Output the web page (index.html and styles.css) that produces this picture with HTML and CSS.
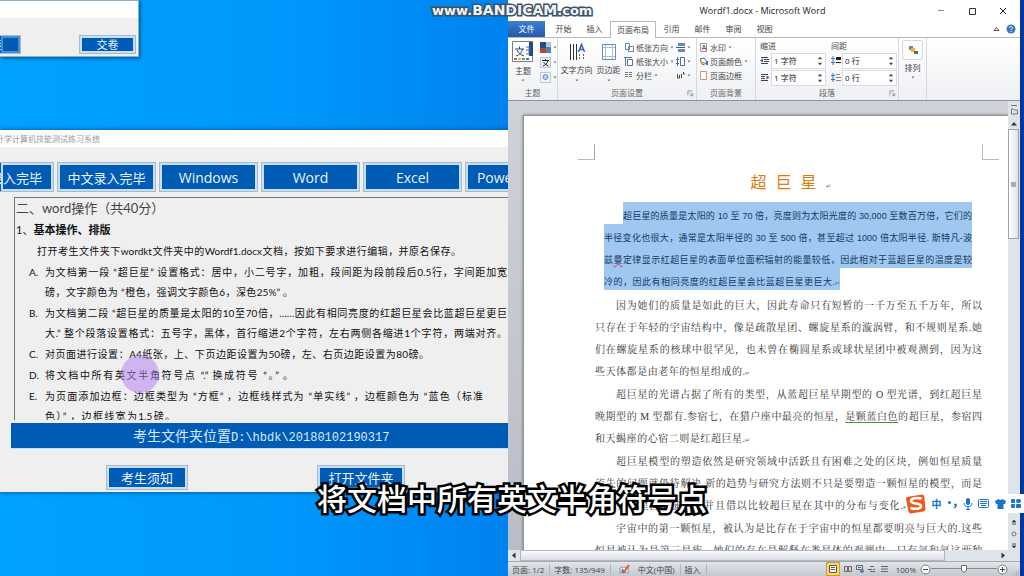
FILE: index.html
```html
<!DOCTYPE html>
<html lang="zh-CN">
<head>
<meta charset="utf-8">
<title>Wordf1.docx - Microsoft Word</title>
<link rel="stylesheet" href="styles.css">
</head>
<body>
<svg class="defs" aria-hidden="true">
  <symbol id="launch" viewBox="0 0 8 8"><path d="M1 6V1h5M3 3l3 3M6.500 3.500v3h-3" fill="none" stroke="#8a8f98"/></symbol>
  <symbol id="spin" viewBox="0 0 6 12"><path d="M0.500 4L3 1l2.500 3zM0.500 8L3 11l2.500-3z" fill="#444"/></symbol>
  <symbol id="down" viewBox="0 0 4 3"><path d="M0.500 0.500h3L2 2.500z" fill="#777"/></symbol>
</svg>
<main class="desktop">

  <section class="window timer" aria-label="考试">
    <div class="timer-title"></div>
    <div class="timer-body">
      <button class="exam-btn timer-left">能</button>
      <button class="exam-btn timer-submit">交卷</button>
    </div>
  </section>

  <section class="window exam" aria-label="考试系统">
    <header class="exam-title">升学计算机技能测试练习系统</header>
    <nav class="exam-nav">
      <button class="exam-btn nav-cut">录入完毕</button>
      <button class="exam-btn nav-btn">中文录入完毕</button>
      <button class="exam-btn nav-btn">Windows</button>
      <button class="exam-btn nav-btn">Word</button>
      <button class="exam-btn nav-btn">Excel</button>
      <button class="exam-btn nav-btn">PowerPoint</button>
    </nav>
    <article class="task">
      <h1 class="task-head">二、word操作（共40分）</h1>
      <h2 class="task-sub"><span>1、</span>基本操作、排版</h2>
      <p class="task-intro"><span class="row w-intro">打开考生文件夹下wordkt文件夹中的Wordf1.docx文档，按如下要求进行编辑，并原名保存。</span></p>
      <div class="task-item"><span>A.</span><p><span class="row w-full">为文档第一段 “超巨星” 设置格式：居中，小二号字，加粗，段间距为段前段后0.5行，字间距加宽</span><span class="row w-half">磅，文字颜色为 “橙色，强调文字颜色6，深色25%” 。</span></p></div>
      <div class="task-item"><span>B.</span><p><span class="row w-full">为文档第二段 “超巨星的质量是太阳的10至70倍，……因此有相同亮度的红超巨星会比蓝超巨星更巨</span><span class="row w-full">大.” 整个段落设置格式：五号字，黑体，首行缩进2个字符，左右两侧各缩进1个字符，两端对齐。</span></p></div>
      <div class="task-item"><span>C.</span><p><span class="row w-page">对页面进行设置：A4纸张，上、下页边距设置为50磅，左、右页边距设置为80磅。</span></p></div>
      <div class="task-item"><span>D.</span><p><span class="row w-half">将文档中所有英文半角符号点 “.” 换成符号 “。” 。</span></p></div>
      <div class="task-item"><span>E.</span><p><span class="row w-edge">为页面添加边框：边框类型为 “方框” ，边框线样式为 “单实线” ，边框颜色为 “蓝色（标准</span><span class="row w-tail">色）” ，边框线宽为1.5磅。</span></p></div>
    </article>
    <div class="folder-bar">考生文件夹位置<span>D:\hbdk\20180102190317</span></div>
    <footer class="exam-foot">
      <button class="exam-btn foot-btn">考生须知</button>
      <button class="exam-btn foot-btn foot-open">打开文件夹</button>
    </footer>
  </section>
  <div class="pointer-halo"></div>

  <section class="window word" aria-label="Microsoft Word">
    <header class="word-title">
      <span class="word-name">Wordf1.docx - Microsoft Word</span>
      <div class="word-ctl">
        <button aria-label="最小化"><svg width="8" height="8"><path d="M1 3.500h6" stroke="#888"/></svg></button>
        <button aria-label="最大化"><svg width="8" height="8"><path d="M1.500 1.500h6v6h-6z" fill="none" stroke="#333"/></svg></button>
        <button aria-label="关闭"><svg width="8" height="8"><path d="M1 1l6 6M7 1L1 7" stroke="#222"/></svg></button>
      </div>
    </header>
    <nav class="tabs">
      <button class="tab tab-file">文件</button>
      <button class="tab">开始</button>
      <button class="tab">插入</button>
      <button class="tab tab-on">页面布局</button>
      <button class="tab">引用</button>
      <button class="tab">邮件</button>
      <button class="tab">审阅</button>
      <button class="tab">视图</button>
      <span class="tab-help">
        <svg width="7" height="6"><path d="M1 4.500L3.500 1.500 6 4.500z" fill="none" stroke="#555"/></svg>
        <svg width="10" height="10"><circle cx="5" cy="5" r="4.500" fill="#3c78c0"/><path d="M3.500 4c0-2 3-2 3 0 0 1-1.500 1-1.500 2M5 7v1" fill="none" stroke="#fff"/></svg>
      </span>
    </nav>

    <div class="ribbon">
      <section class="group g-theme">
        <div class="group-body">
          <button class="big">
            <svg width="22" height="22" viewBox="0 0 22 22"><path d="M0.500 0.500h20v20h-20z" fill="#fff" stroke="#687c9c"/><path d="M17 1h4v14h-4z" fill="#27498a"/><path d="M3 8h9M7.500 5.500V8M4 15c4-1 6-4 6.500-7M5 9c1 3 4 5 7 6" fill="none" stroke="#27498a"/><path d="M14 6h3v7h-3M14 9h3" fill="none" stroke="#5479b4"/><path d="M2 17h3v2H2z" fill="#d3622d"/><path d="M6 17h3v2H6z" fill="#e8b437"/><path d="M10 17h3v2h-3z" fill="#64a244"/><path d="M14 17h3v2h-3z" fill="#3c78c0"/></svg>
            <span>主题</span><svg width="4" height="3"><use href="#down"/></svg>
          </button>
          <div class="stack stack-theme">
            <button class="mini" aria-label="颜色"><svg width="11" height="11"><path d="M0 0h6v6H0z" fill="#254d80"/><path d="M6 0h5v6H6z" fill="#b5c4d8"/><path d="M0 6h6v5H0z" fill="#b04a32"/><path d="M6 6h5v5H6z" fill="#e6e0dc"/><path d="M6 5h5v6H6z" fill="#587cb5"/></svg><svg width="4" height="3"><use href="#down"/></svg></button>
            <button class="mini" aria-label="字体"><svg width="11" height="11"><path d="M0.500 0.500h10v10h-10z" fill="#eef3fa" stroke="#b7c6dc"/><path d="M2 3.500h7M5.500 2v1.500M3 9c3-1 4-3 5-5M3.500 5c1 2 3 3 5 4" fill="none" stroke="#222"/></svg><svg width="4" height="3"><use href="#down"/></svg></button>
            <button class="mini" aria-label="效果"><svg width="11" height="11"><path d="M0.500 0.500h10v10h-10z" fill="#f1f5fa" stroke="#b7c6dc"/><circle cx="5.500" cy="5" r="2.500" fill="#b7d4f5" stroke="#5b8ed1"/></svg><svg width="4" height="3"><use href="#down"/></svg></button>
          </div>
        </div>
        <footer class="group-name">主题</footer>
      </section>

      <section class="group g-setup">
        <div class="group-body">
          <button class="big">
            <svg width="18" height="18"><path d="M2.500 1v16M5.500 1v16M8.500 1v16" stroke="#333"/><path d="M10.500 9L13.500 1.500l3 7.500M11.500 6.500h4" fill="none" stroke="#2a66b0" stroke-width="1.500"/><path d="M11.500 11v6M15.500 11v6" stroke="#666" stroke-dasharray="2 1"/></svg>
            <span>文字方向</span><svg width="4" height="3"><use href="#down"/></svg>
          </button>
          <button class="big">
            <svg width="14" height="18"><path d="M0.500 1.500h13v15h-13z" fill="#fff" stroke="#758ba9"/><path d="M3.500 2v14M10.500 2v14M1 4.500h12M1 13.500h12" stroke="#9dc3ea"/></svg>
            <span>页边距</span><svg width="4" height="3"><use href="#down"/></svg>
          </button>
          <div class="stack">
            <button class="mini"><svg width="10" height="9"><path d="M1.500 0.500h4v6h-4zM4.500 3.500h5v5h-5z" fill="#fff" stroke="#6783aa"/></svg>纸张方向<svg width="4" height="3"><use href="#down"/></svg></button>
            <button class="mini"><svg width="10" height="9"><path d="M0 0.500h8M1.500 0v9" stroke="#4f75a8"/><path d="M3.500 2.500h5v6h-5z" fill="#fff" stroke="#4f75a8"/></svg>纸张大小<svg width="4" height="3"><use href="#down"/></svg></button>
            <button class="mini"><svg width="10" height="9"><path d="M1 1.500h3M5 1.500h3M1 3.500h3M5 3.500h3M1 5.500h3M5 5.500h3" stroke="#777"/></svg>分栏<svg width="4" height="3"><use href="#down"/></svg></button>
          </div>
          <div class="stack">
            <button class="mini" aria-label="分隔符"><svg width="9" height="9"><path d="M2 0h7v3H2zM2 6h7v3H2z" fill="#6c87aa"/><path d="M0 4.500h9" stroke="#2b5f9f"/></svg><svg width="4" height="3"><use href="#down"/></svg></button>
            <button class="mini" aria-label="行号"><svg width="9" height="9"><path d="M1.500 0v9M0 2.500h3M0 6.500h3" stroke="#3b6eaf"/><path d="M4.500 0.500h4v8h-4z" fill="#fff" stroke="#526f97"/></svg><svg width="4" height="3"><use href="#down"/></svg></button>
            <button class="mini" aria-label="断字"><svg width="9" height="9"><path d="M1.500 3v4h2V4M5.500 7V3M7.500 1v2h2" fill="none" stroke="#444"/></svg><svg width="4" height="3"><use href="#down"/></svg></button>
          </div>
        </div>
        <footer class="group-name">页面设置<svg width="7" height="7"><use href="#launch"/></svg></footer>
      </section>

      <section class="group g-back">
        <div class="group-body">
          <div class="stack">
            <button class="mini"><svg width="9" height="9"><path d="M1.500 0.500h6v8h-6z" fill="#fff" stroke="#8998b0"/><path d="M3 7l2-5 2 5M3.500 5.500h3" fill="none" stroke="#b34452"/></svg>水印<svg width="4" height="3"><use href="#down"/></svg></button>
            <button class="mini"><svg width="9" height="9"><path d="M1 2l4-1 3 4-4 3z" fill="#fff" stroke="#4b678e"/><path d="M1 5h5L3 8z" fill="#e29a36"/><path d="M8 4v4" stroke="#3c78c0" stroke-width="2"/></svg>页面颜色<svg width="4" height="3"><use href="#down"/></svg></button>
            <button class="mini"><svg width="9" height="9"><path d="M1.500 0.500h6v8h-6z" fill="#fff" stroke="#c39b76"/></svg>页面边框</button>
          </div>
        </div>
        <footer class="group-name">页面背景</footer>
      </section>

      <section class="group g-para">
        <div class="group-body para-body">
          <div class="spins">
            <span class="spins-head">缩进</span>
            <label class="spin-row"><svg width="10" height="9"><path d="M1 1.500h7M4 3.500h5M4 5.500h5M1 7.500h7" stroke="#444"/><path d="M0 4.500l3-2v4z" fill="#2a66b0"/></svg><span class="spin-box"><input value="1 字符" aria-label="左缩进"><svg width="6" height="10"><use href="#spin"/></svg></span></label>
            <label class="spin-row"><svg width="10" height="9"><path d="M1 1.500h7M1 3.500h4M1 5.500h4M1 7.500h7" stroke="#444"/><path d="M9.500 4.500l-3-2v4z" fill="#2a66b0"/></svg><span class="spin-box"><input value="1 字符" aria-label="右缩进"><svg width="6" height="10"><use href="#spin"/></svg></span></label>
          </div>
          <div class="spins">
            <span class="spins-head">间距</span>
            <label class="spin-row"><svg width="10" height="9"><path d="M2 0v9M0 2.500h4M0 6.500h4" stroke="#3c78c0"/><path d="M5 1h5v3H5zM5 6h5v1H5z" fill="#222"/></svg><span class="spin-box"><input value="0 行" aria-label="段前"><svg width="6" height="10"><use href="#spin"/></svg></span></label>
            <label class="spin-row"><svg width="10" height="9"><path d="M2 0v9M0 2.500h4M0 6.500h4" stroke="#3c78c0"/><path d="M5 1h4v1H5zM5 4h5v1H5zM5 7h5v1H5z" fill="#888"/></svg><span class="spin-box"><input value="0 行" aria-label="段后"><svg width="6" height="10"><use href="#spin"/></svg></span></label>
          </div>
        </div>
        <footer class="group-name">段落<svg width="7" height="7"><use href="#launch"/></svg></footer>
      </section>

      <section class="group g-arr">
        <button class="big">
          <span class="arr-icon"><svg width="10" height="10"><path d="M1 1h4v4H1z" fill="#8c8273"/><path d="M3 3h4v4H3z" fill="#e9b04b"/><path d="M6 6h4v3H6z" fill="#666"/></svg></span>
          <span>排列</span><svg width="4" height="3"><use href="#down"/></svg>
        </button>
      </section>
    </div>

    <div class="work">
      <div class="canvas">
        <article class="page">
          <div class="crops"><i class="crop crop-l"></i><i class="crop crop-r"></i></div>
          <h1 class="doc-title"><span>超</span><span>巨</span><span>星</span><small>↵</small></h1>
          <div class="selected">
            <p class="sel sel-first">超巨星的质量是太阳的 10 至 70 倍，亮度则为太阳光度的 30,000 至数百万倍，它们的</p>
            <p class="sel">半径变化也很大，通常是太阳半径的 30 至 500 倍，甚至超过 1000 倍太阳半径. 斯特凡-波</p>
            <p class="sel">兹<u class="typo">曼</u>定律显示红超巨星的表面单位面积辐射的能量较低，因此相对于蓝超巨星的温度是较</p>
            <p class="sel sel-last">冷的，因此有相同亮度的红超巨星会比蓝超巨星更巨大.<small>↵</small></p>
          </div>
          <div class="para">
            <p class="line line-first">因为她们的质量是如此的巨大，因此寿命只有短暂的一千万至五千万年，所以</p>
            <p class="line">只存在于年轻的宇宙结构中，像是疏散星团、螺旋星系的漩涡臂，和不规则星系.她</p>
            <p class="line">们在螺旋星系的核球中很罕见，也未曾在椭圆星系或球状星团中被观测到，因为这</p>
            <p class="line line-short">些天体都是由老年的恒星组成的.<small>↵</small></p>
          </div>
          <div class="para">
            <p class="line line-first">超巨星的光谱占据了所有的类型，从蓝超巨星早期型的 O 型光谱，到红超巨星</p>
            <p class="line">晚期型的 M 型都有.参宿七，在猎户座中最亮的恒星，<u class="gram">是颗蓝白色</u>的超巨星，参宿四</p>
            <p class="line line-short">和天蝎座的心宿二则是红超巨星.<small>↵</small></p>
          </div>
          <div class="para">
            <p class="line line-first">超巨星模型的塑造依然是研究领域中活跃且有困难之处的区块，例如恒星质量</p>
            <p class="line">流失的问题就仍待解决.新的趋势与研究方法则不只是要塑造一颗恒星的模型，而是</p>
            <p class="line line-long">针对整个星团的演化，并且借以比较超巨星在其中的分布与变化.<small>↵</small></p>
          </div>
          <div class="para">
            <p class="line line-first">宇宙中的第一颗恒星，被认为是比存在于宇宙中的恒星都要明亮与巨大的.这些</p>
            <p class="line">恒星被认为是第三星族，她们的存在是解释在类星体的观测中，只有氢和氦这两种</p>
          </div>
        </article>
      </div>
      <div class="vscroll">
        <button class="ruler-btn" aria-label="标尺"><svg width="8" height="12"><path d="M1 1.500h6M1.500 10V5h2l1 1h3v4z" fill="none" stroke="#777"/></svg></button>
        <button class="vs-arrow" aria-label="向上"><svg width="8" height="5"><path d="M1 4.500L4 1l3 3.500z" fill="#333"/></svg></button>
        <div class="vs-thumb"></div>
        <div class="vs-jump">
          <svg width="6" height="6"><path d="M1 3L3 1l2 2zM1 5h4" fill="#444" stroke="#555"/></svg>
          <svg width="6" height="6"><circle cx="3" cy="3" r="2" fill="none" stroke="#777"/></svg>
          <svg width="6" height="6"><path d="M1 1h4M1 3h4L3 5z" fill="#444" stroke="#555"/></svg>
        </div>
      </div>
      <div class="hscroll">
        <button aria-label="向左"><svg width="5" height="7"><path d="M4.500 0.500v6L1 3.500z" fill="#333"/></svg></button>
        <div class="hs-track"><div class="hs-thumb"></div></div>
        <button aria-label="向右"><svg width="5" height="7"><path d="M0.500 0.500v6L4 3.500z" fill="#333"/></svg></button>
      </div>
    </div>

    <footer class="status">
      <span class="st">页面: 1/2</span>
      <span class="st">字数: 135/949</span>
      <svg class="st-proof" width="11" height="10"><path d="M1 4l4-1 4 1v5L5 8 1 9z" fill="#fff" stroke="#8796b0"/><path d="M3 5l2 3 5-7" fill="none" stroke="#dd5a2c" stroke-width="2"/><path d="M2 7l3 2" stroke="#3c78c0"/></svg>
      <span class="st">中文(中国)</span>
      <span class="st">插入</span>
      <span class="views">
        <i class="view-on"><svg width="8" height="8"><path d="M0.500 0.500h7v7h-7zM2 2.500h4M2 4.500h4" fill="#fff" stroke="#555"/></svg></i>
        <svg width="8" height="8"><path d="M0.500 1.500h3v5h-3zM4.500 1.500h3v5h-3z" fill="none" stroke="#666"/></svg>
        <svg width="8" height="8"><path d="M0.500 0.500h6v4h-6zM2 2.500h3" fill="none" stroke="#666"/><circle cx="6" cy="6" r="2" fill="#5b7fae"/></svg>
        <svg width="8" height="8"><path d="M2 1.500h4M0 4.500h4M5 4.500h2M2 6.500h5" stroke="#666"/></svg>
        <svg width="8" height="8"><path d="M1 1.500h7M1 4h7M1 6.500h7" stroke="#666"/></svg>
      </span>
      <span class="zoom-num">100%</span>
      <button class="zoom-btn" aria-label="缩小"><svg width="11" height="11"><circle cx="5.500" cy="5.500" r="4.500" fill="#fff" stroke="#777"/><path d="M3 5.500h5" stroke="#444"/></svg></button>
      <svg class="zoom-track" viewBox="0 0 66 10" preserveAspectRatio="none"><path d="M0 4.500h66" stroke="#888"/><path d="M30.500 1.500h5v5L33 8.500l-2.500-2z" fill="#fff" stroke="#666"/></svg>
      <button class="zoom-btn" aria-label="放大"><svg width="11" height="11"><circle cx="5.500" cy="5.500" r="4.500" fill="#fff" stroke="#777"/><path d="M3 5.500h5M5.500 3v5" stroke="#444"/></svg></button>
      <svg class="grip" width="6" height="6"><path d="M4 1h2M2 3h4M0 5h6" stroke="#999" stroke-dasharray="1 1"/></svg>
    </footer>
  </section>

  <div class="ime">
    <svg width="20" height="20" viewBox="0 0 20 20"><path d="M1 3L16 0.500q2 0 2.300 2L19.500 15q0 2-2 2.500L5 19.500q-2 0-2.500-2L0 5q0-1.500 1-2z" fill="#ea5b22"/><path d="M15.500 4.500C10 3 5 4.500 5 7c0 3.500 10 1.500 10 5 0 3-6 3.500-10.500 2" fill="none" stroke="#fff" stroke-width="2.500"/></svg>
    <span>中</span>
    <svg width="10" height="10"><circle cx="2.500" cy="3.500" r="1.500" fill="#1673d0"/><path d="M7 5.500h2v1.500L7.500 9" fill="none" stroke="#1673d0" stroke-width="1.500"/></svg>
    <svg width="10" height="12"><rect x="3" y="0" width="4" height="7" rx="2" fill="#1673d0"/><path d="M1 5c0 5 8 5 8 0M5 9v2M3 11.500h4" fill="none" stroke="#1673d0"/></svg>
    <svg width="11" height="9"><rect x="0.500" y="0.500" width="10" height="8" rx="1" fill="#fff" stroke="#1673d0"/><path d="M2 2.500h7M2 4.500h7M3 6.500h5" stroke="#1673d0"/></svg>
    <svg width="11" height="10"><path d="M0 2l3.500-2q2 2 4 0L11 2 10 5H8.500v5h-6V5H1z" fill="#1673d0"/></svg>
    <svg width="10" height="10"><rect x="0" y="0" width="4" height="4" rx="1" fill="#1673d0"/><rect x="5" y="0" width="5" height="4" rx="2" fill="#1673d0"/><rect x="0" y="5" width="4" height="4" rx="1" fill="#1673d0"/><rect x="5" y="5" width="5" height="4" rx="1" fill="#1673d0"/></svg>
  </div>

  <div class="watermark"><small>www.</small>BANDICAM<small>.com</small></div>
  <div class="subtitle">将文档中所有英文半角符号点</div>
</main>
</body>
</html>
```
FILE: styles.css
```css
* { box-sizing: border-box; }
body { margin: 0; }
h1, h2, p { margin: 0; font-weight: 400; }
button, input { font: inherit; color: inherit; padding: 0; margin: 0; border: 0; background: none; }
svg { display: block; flex: none; }
.defs { position: absolute; width: 0; height: 0; }

.desktop {
  position: relative;
  height: 100vh;
  overflow: hidden;
  background: linear-gradient(90deg, #00a2ff 0%, #0098fc 28%, #0082ee 50%, #0036a4 99%);
  font-family: "Open Sans", "Noto Sans CJK SC", sans-serif;
}
.window { position: absolute; overflow: hidden; }

/* blue framed buttons of the exam program */
.exam-btn {
  background: #005bb5;
  color: #e9f4ff;
  border: 1px solid #b4b8bc;
  outline: 2px solid #bfe0ff;
  outline-offset: -3px;
  font-size: 14px;
  white-space: nowrap;
  overflow: hidden;
}

.timer { left: 0; top: 0; width: 139px; background: #efefef; border: 1px solid #8fb0c4; border-left: 0; box-shadow: 1px 1px 4px #004c88; }
.timer-title { height: 17px; background: #fff; }
.timer-body { display: flex; justify-content: space-between; padding: 17px 2px 2px 0; }
.timer-body .exam-btn { height: 19px; font-size: 11px; line-height: 14px; }
.timer-body .timer-left { width: 21px; border-left: 0; direction: rtl; text-align: right; padding-right: 17px; outline-color: #3f8fdc; }
.timer-submit { width: 57px; }

.exam { left: 0; top: 130px; width: 520px; background: #efefef; box-shadow: 0 0 5px #004c88; }
.exam-title { height: 17px; padding-left: 4px; background: #fff; color: #999; font-size: 8px; line-height: 17px; text-indent: -8px; }
.exam-nav { display: flex; gap: 3px; padding-top: 15px; }
.exam-nav .exam-btn { flex: none; height: 30px; }
.exam-nav .nav-cut { width: 54px; border-left: 0; direction: rtl; text-align: right; padding-right: 11px; font-size: 13px; }
.nav-btn { width: 99px; }
.nav-btn:nth-child(2) { font-size: 13px; }
.task {
  height: 223px;
  margin: 5px 0 0 14px;
  padding-left: 1px;
  overflow: hidden;
  border-top: 1px solid #777;
  border-left: 1px solid #777;
  color: #111;
  font-family: Lato, "Noto Sans CJK SC", sans-serif;
  font-size: 10px;
  line-height: 20px;
  white-space: nowrap;
}
.task-head { font-size: 13px; line-height: 20px; color: #444; }
.task-sub { font-size: 11px; line-height: 23px; font-weight: 700; }
.task-sub span { font-weight: 400; }
.task-intro { padding-left: 21px; margin-bottom: 1px; }
.task-item { display: grid; grid-template-columns: 16px 1fr; padding-left: 13px; margin-bottom: 1px; }
.row { display: block; text-align-last: justify; }
.w-intro { width: 424px; }
.w-full { width: 462px; }
.w-page { width: 384px; }
.w-half { width: 248px; }
.w-edge { width: 438px; }
.w-tail { width: 130px; }
.folder-bar {
  margin: 3px 0 0 11px;
  height: 26px;
  padding-left: 122px;
  background: #005bb5;
  border-bottom: 1px solid #bfe0ff;
  color: #d7ebff;
  font-size: 14px;
  line-height: 25px;
}
.folder-bar span { font-family: "Liberation Mono", monospace; font-size: 12px; }
.exam-foot { display: flex; gap: 129px; padding: 16px 0 2px 106px; }
.foot-btn { width: 82px; height: 25px; font-size: 13px; line-height: 18px; }
.foot-open { width: 88px; }
.pointer-halo { position: absolute; left: 121px; top: 355px; width: 38px; height: 38px; border-radius: 50%; background: #b07cf080; }

/* word processor window */
.word {
  left: 508px; top: 0; right: 4px; bottom: 0;
  display: flex; flex-direction: column;
  background: #fff; color: #444;
  font-size: 8px;
  white-space: nowrap;
}
.word button { display: flex; align-items: center; justify-content: center; }
.word-title { display: flex; align-items: center; height: 21px; padding-right: 13px; }
.word-name { flex: 1; text-align: center; font-size: 9px; color: #222; }
.word-ctl { display: flex; gap: 23px; }
.word-title .word-name { padding-left: 80px; }

.tabs { display: flex; height: 17px; border-bottom: 1px solid #b5b9c0; line-height: 16px; }
.tab { width: 31px; flex: none; }
.tab-file { width: 37px; margin-right: 3px; background: linear-gradient(#3d7fd0, #2159ab); color: #fff; }
.tab-on { width: 46px; height: 17px; border: 1px solid #b5b9c0; border-bottom: 0; background: #fff; }
.tab-help { display: flex; gap: 6px; align-items: center; margin-left: auto; padding-right: 4px; }

.ribbon { display: flex; height: 63px; background: linear-gradient(#fff, #eef0f3); border-bottom: 1px solid #8f949c; }
.group { display: flex; flex-direction: column; flex: none; border-right: 1px solid #d5d8dd; }
.group-body { flex: 1; display: flex; padding-top: 2px; }
.group-name { position: relative; height: 13px; line-height: 12px; text-align: center; color: #666; }
.group-name svg { position: absolute; right: 2px; top: 3px; }
.g-theme { width: 50px; }
.g-setup { width: 139px; }
.g-back { width: 59px; }
.g-para { width: 143px; }
.g-arr { width: 28px; }
.word .big { flex-direction: column; justify-content: flex-start; flex: none; gap: 2px; width: 30px; line-height: 12px; padding-top: 1px; }
.g-setup .big { padding-top: 3px; gap: 3px; width: 27px; }
.g-setup .big:first-child { width: 37px; }
.stack { display: flex; flex-direction: column; }
.word .mini { height: 14px; gap: 2px; justify-content: flex-start; padding-left: 2px; }
.stack-theme .mini { height: 15px; }
.para-body { gap: 5px; padding-left: 4px; }
.spins { width: 66px; }
.spins-head { display: block; line-height: 12px; }
.spin-row { display: flex; align-items: center; gap: 1px; height: 17px; }
.spin-box { display: flex; flex: 1; align-items: center; height: 16px; border: 1px solid #d9dce1; background: #fff; padding: 0 2px; }
.spin-box input { flex: 1; min-width: 0; width: 20px; height: 14px; color: #222; }
.word .g-arr .big { width: 27px; padding-top: 2px; }
.arr-icon { display: grid; place-items: center; width: 21px; height: 20px; border: 1px solid #d5d8dd; border-radius: 2px; }

.work { flex: 1; min-height: 0; display: grid; grid-template: 1fr 11px / 1fr 12px; }
.canvas { overflow: hidden; padding: 14px 0 0 15px; background: linear-gradient(#cfd2d8, #b9bdc5); }
.page { height: 600px; background: #fff; border: 1px solid #8f939b; border-right: 0; border-bottom: 0; padding: 28px 26px 0 71px; color: #333; box-shadow: 0 0 3px #777; }
.crops { display: flex; justify-content: space-between; margin: 0 -17px; height: 16px; }
.crop { width: 17px; border-bottom: 1px solid #bbb; }
.crop-l { border-right: 1px solid #aaa; }
.crop-r { border-left: 1px solid #bbb; }
.doc-title { display: flex; justify-content: center; align-items: baseline; gap: 9px; margin: 10px 0 4px; padding-left: 4px; font-size: 16px; line-height: 24px; color: #e07b12; }
.page small { font-size: 6px; color: #666; }
.selected { padding: 0 10px 0 9px; margin-bottom: 5px; color: #12395f; font-family: "Liberation Sans", "Noto Sans CJK SC", sans-serif; font-size: 9px; }
.sel { height: 22px; padding-top: 4px; line-height: 20px; background: #9fc8f0; text-align-last: justify; }
.sel-first { margin-left: 19px; }
.sel-last { width: 236px; }
.typo { text-decoration: underline wavy #d04040 1px; text-underline-offset: 0; }
.gram { text-decoration: underline #3a9a3a 1px; text-underline-offset: 2px; }
.para { margin-bottom: 1px; font-family: "Liberation Serif", "Noto Serif CJK SC", "Noto Sans CJK SC", serif; font-size: 10px; line-height: 22px; }
.line { height: 22px; text-align-last: justify; }
.line-first { margin-left: 21px; }
.line-short { width: 155px; }
.line-long { width: 313px; }

.vscroll { display: flex; flex-direction: column; align-items: center; background: #dfe3ea; padding-right: 1px; }
.ruler-btn { height: 17px; }
.vs-arrow { height: 11px; }
.vs-thumb { width: 11px; height: 110px; border: 1px solid #9ba2ad; background: linear-gradient(90deg, #fff, #dde1e8); display: grid; place-items: center; }
.vs-thumb::before { content: ""; width: 5px; height: 5px; background: #a7acb5; }
.vs-jump { margin-top: auto; display: flex; flex-direction: column; gap: 6px; padding-bottom: 1px; }
.hscroll { grid-column: 1 / -1; display: flex; align-items: center; background: #dfe3ea; padding: 0 14px 0 3px; gap: 4px; }
.hs-track { flex: 1; height: 11px; }
.hs-thumb { width: 89%; height: 100%; border: 1px solid #b1b6bf; background: linear-gradient(#fafbfc, #dadee5); }

.status { display: flex; align-items: center; height: 15px; background: linear-gradient(#e2e5ea, #c3c7ce); border-top: 1px solid #a5aab2; font-size: 8px; padding-left: 4px; }
.st { padding-right: 5px; margin-right: 4px; border-right: 1px solid #b0b4bb; line-height: 11px; }
.st-proof { margin: 0 8px 0 4px; }
.views { display: flex; align-items: center; gap: 4px; margin-left: auto; }
.view-on { padding: 2px; background: #ffd868; border: 1px solid #c79a3a; }
.zoom-num { margin: 0 4px 0 8px; font-size: 8px; }
.zoom-track { width: 66px; height: 10px; }
.grip { margin-left: 6px; align-self: flex-end; }

.ime { position: absolute; right: 0; top: 494px; width: 118px; height: 19px; display: flex; align-items: center; justify-content: space-between; padding-right: 3px; background: #fff; color: #1673d0; font-size: 10px; font-weight: 700; }
.watermark {
  position: absolute; left: 432px; top: 1px;
  font-family: "DejaVu Sans", sans-serif; font-weight: 700; font-size: 14px; line-height: 18px;
  color: #f2f5f8; -webkit-text-stroke: 3px #3d5266; paint-order: stroke fill; white-space: nowrap;
}
.watermark small { font-size: 13px; }
.subtitle {
  position: absolute; left: 0; right: 0; top: 477px; text-align: center;
  font-size: 30px; line-height: 44px; font-weight: 500;
  color: #fff; -webkit-text-stroke: 5px #000; paint-order: stroke fill; white-space: nowrap;
}
```
